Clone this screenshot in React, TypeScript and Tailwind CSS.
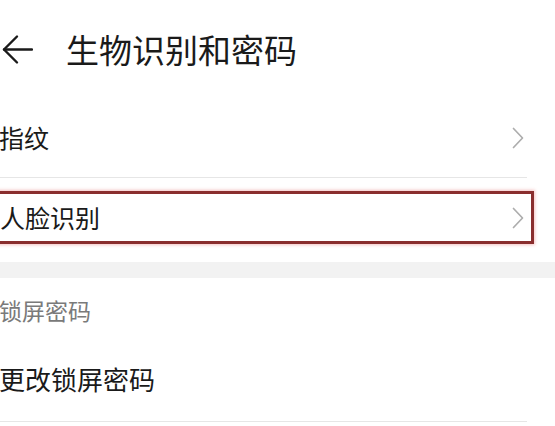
import React from "react";

function Chevron() {
  return (
    <svg width="12" height="22" viewBox="0 0 12 22" fill="none" className="shrink-0">
      <path d="M1.5 1.5 L10.5 11 L1.5 20.5" stroke="#adadad" strokeWidth="1.7" strokeLinecap="round" strokeLinejoin="round" />
    </svg>
  );
}

export default function App() {
  return (
    <div className="w-[555px] h-[426px] bg-white overflow-hidden text-[#1a1a1a] font-['Noto_Sans_CJK_SC','Noto_Sans',sans-serif]">
      {/* Header */}
      <div className="h-[98px] flex items-center">
        <svg width="31" height="31" viewBox="0 0 31 31" fill="none" className="ml-[2px] shrink-0">
          <path d="M2 15.5 H30" stroke="#1a1a1a" strokeWidth="2.4" strokeLinecap="round" />
          <path d="M15 2.5 L2 15.5 L15 28.5" stroke="#1a1a1a" strokeWidth="2.4" strokeLinecap="round" strokeLinejoin="round" />
        </svg>
        <div className="ml-[33px] text-[33px] leading-none">生物识别和密码</div>
      </div>

      {/* Row 1 */}
      <div className="h-[79px] flex items-center justify-between w-[527px]">
        <div className="text-[25px] leading-none -ml-[1px]">指纹</div>
        <div className="mr-[3px]"><Chevron /></div>
      </div>
      <div className="h-px w-[527px] bg-[#e6e6e6]" />

      {/* Row 2 highlighted */}
      <div className="mt-[13px] -ml-[5px] w-[539px] h-[53px] border-[3px] border-[#8a2e2e] shadow-[0_0_3px_1px_rgba(230,120,120,0.45)] flex items-center justify-between">
        <div className="ml-[2px] text-[25px] leading-none">人脸识别</div>
        <div className="mr-[7px]"><Chevron /></div>
      </div>

      {/* Gray separator */}
      <div className="mt-[18px] h-[16px] bg-[#f2f2f2]" />

      {/* Section header */}
      <div className="h-[64px] flex items-center">
        <div className="text-[23px] leading-none text-[#7a7a7a] -ml-[1px]">锁屏密码</div>
      </div>

      {/* Row 3 */}
      <div className="h-[79px] pb-[6px] flex items-center">
        <div className="text-[26px] leading-none -ml-[1px]">更改锁屏密码</div>
      </div>
      <div className="h-px w-[527px] bg-[#e6e6e6]" />
    </div>
  );
}
